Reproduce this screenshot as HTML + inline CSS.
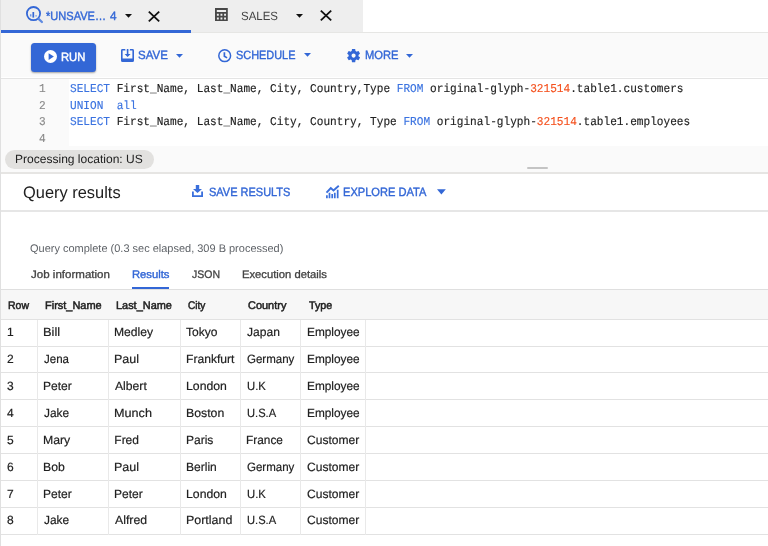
<!DOCTYPE html>
<html><head><meta charset="utf-8">
<style>
html,body{margin:0;padding:0;}
body{width:768px;height:546px;overflow:hidden;background:#fff;position:relative;font-family:"Liberation Sans",sans-serif;color:#212121;}
.a{text-rendering:geometricPrecision;position:absolute;white-space:nowrap;line-height:1;transform-origin:0 0;}
.b{color:#3367d6;-webkit-text-stroke:0.38px #3367d6;}
.tabbar{left:0;top:0;width:363px;height:32px;background:#eeeeee;}
.mono{font-family:"Liberation Mono",monospace;font-size:12px;transform:scaleX(0.926);-webkit-text-stroke:0.15px;}
.k{color:#3b73e0;}
.n{color:#f4511e;}
svg{position:absolute;overflow:visible;}
.cell{font-size:12px;color:#212121;-webkit-text-stroke:0.18px #212121;}
.th{font-size:11.1px;color:#212121;-webkit-text-stroke:0.5px #212121;}
.hl{position:absolute;left:0;width:768px;height:1px;background:#e2e2e2;}
.vl{position:absolute;width:1px;background:#e9e9e9;top:319.7px;height:215px;}
</style></head><body><div id="root" style="position:absolute;left:0;top:0;width:768px;height:546px;will-change:transform;">
<!-- tab bar -->
<div class="a tabbar"></div>
<div class="a" style="left:0;top:32.3px;width:768px;height:1.2px;background:#e6e6e4;"></div>
<div class="a" style="left:0;top:0;width:1px;height:546px;background:#e0e0e0;"></div>
<div class="a" style="left:1px;top:30.4px;width:190px;height:2.2px;background:#3367d6;"></div>
<svg style="left:24px;top:4px" width="22" height="22" viewBox="0 0 22 22"><circle cx="9.5" cy="9.6" r="6.6" fill="none" stroke="#3367d6" stroke-width="1.8"/><path d="M14.6 14.9L17.9 18" stroke="#5f8ae0" stroke-width="2.3" stroke-linecap="round"/><path d="M9.3 8v5.6" stroke="#3367d6" stroke-width="1.7"/><path d="M6.7 10.2v2.4M12.1 11.2v1.4" stroke="#6f96e4" stroke-width="1.5"/></svg>
<div class="a b" id="t1" style="left:45.56px;top:10px;font-size:12px;transform:scaleX(0.9213);">*UNSAVE…</div>
<div class="a b" id="t1n" style="left:110.00px;top:10px;font-size:12px;transform:scaleX(0.9811);">4</div>
<svg style="left:124.5px;top:13.8px" width="7" height="4" viewBox="0 0 7 4"><path d="M0 0h7L3.5 3.7z" fill="#111"/></svg>
<svg style="left:148px;top:10.6px" width="12" height="11" viewBox="0 0 12 11"><path d="M0.8 0.6L11.2 10.4M11.2 0.6L0.8 10.4" stroke="#111" stroke-width="1.8"/></svg>
<!-- tab 2 -->
<svg style="left:215px;top:8.1px" width="12.8" height="12.9" viewBox="0 0 12.8 12.9"><path d="M0 0h12.8v12.9h-12.8z M1.800 2.100v1.800h9.300v-1.800z M1.9 5.8v1.9h1.9v-1.9z M5.5 5.8v1.9h1.9v-1.9z M9.1 5.8v1.9h1.9v-1.9z M1.9 9.6v1.9h1.9v-1.9z M5.5 9.6v1.9h1.9v-1.9z M9.1 9.6v1.9h1.9v-1.9z" fill="#484848" fill-rule="evenodd"/></svg>
<div class="a" id="t2" style="left:240.71px;top:10px;font-size:12px;color:#424242;transform:scaleX(0.9548);">SALES</div>
<svg style="left:296.4px;top:14.1px" width="7" height="4" viewBox="0 0 7 4"><path d="M0 0h7L3.5 3.7z" fill="#111"/></svg>
<svg style="left:320.4px;top:10.4px" width="12" height="11" viewBox="0 0 12 11"><path d="M0.8 0.6L11.2 10.4M11.2 0.6L0.8 10.4" stroke="#111" stroke-width="1.8"/></svg>
<!-- toolbar -->
<div class="a" style="left:1px;top:33px;width:767px;height:44px;background:#fafafa;"></div>
<div class="hl" style="top:77.6px;background:#e4e4e4;"></div>
<div class="a" style="left:31px;top:42.5px;width:65px;height:29.5px;background:#3367d6;border-radius:3.5px;box-shadow:0 1px 2px rgba(0,0,0,.35);"></div>
<svg style="left:43.8px;top:49.6px" width="13" height="13" viewBox="0 0 13 13"><circle cx="6.500" cy="6.500" r="6.500" fill="#fff"/><path d="M4.600 3.200v6.800l5.300-3.400z" fill="#3367d6"/></svg>
<div class="a" id="run" style="left:61.31px;top:51px;font-size:12px;color:#fff;-webkit-text-stroke:0.45px #fff;transform:scaleX(0.9371);">RUN</div>
<svg style="left:120.8px;top:49.1px" width="13" height="12.9" viewBox="0 0 13 12.9"><path d="M1.500 0h10a1.500 1.500 0 0 1 1.500 1.500v9.900a1.500 1.500 0 0 1-1.500 1.500h-10a1.500 1.500 0 0 1-1.500-1.500v-9.900a1.500 1.500 0 0 1 1.500-1.500z M1.600 1.600v7.800h9.800v-7.800z" fill="#3367d6" fill-rule="evenodd"/><rect x="4.300" y="-0.200" width="4.600" height="2" fill="#fafafa"/><path d="M5.800 0h1.600v5h2.200l-3 3.100-3-3.100h2.200z" fill="#3367d6"/></svg>
<div class="a b" id="save" style="margin-top:-0.6px;left:138.28px;top:50px;font-size:12px;transform:scaleX(0.9580);">SAVE</div>
<svg style="left:175.6px;top:53.5px" width="7" height="4" viewBox="0 0 7 4"><path d="M0 0h7L3.5 3.7z" fill="#3367d6"/></svg>
<svg style="left:218.3px;top:48.9px" width="13.4" height="13.4" viewBox="0 0 13.4 13.4"><circle cx="6.7" cy="6.7" r="5.9" fill="none" stroke="#3367d6" stroke-width="1.5"/><path d="M6.4 3.300v4l2.700 1.600" fill="none" stroke="#3367d6" stroke-width="1.700"/></svg>
<div class="a b" id="sched" style="margin-top:-0.6px;left:236.49px;top:50px;font-size:12px;transform:scaleX(0.9100);">SCHEDULE</div>
<svg style="left:303.9px;top:53.3px" width="7" height="4" viewBox="0 0 7 4"><path d="M0 0h7L3.5 3.7z" fill="#3367d6"/></svg>
<svg style="left:347.3px;top:48.7px" width="13.2" height="13.2" viewBox="2 2 20 20"><path fill="#3367d6" d="M19.43 12.98c.04-.32.07-.64.07-.98s-.03-.66-.07-.98l2.11-1.65c.19-.15.24-.42.12-.64l-2-3.46c-.12-.22-.39-.3-.61-.22l-2.49 1c-.52-.4-1.08-.73-1.69-.98l-.38-2.65C14.46 2.18 14.25 2 14 2h-4c-.25 0-.46.18-.49.42l-.38 2.65c-.61.25-1.17.59-1.69.98l-2.49-1c-.23-.09-.49 0-.61.22l-2 3.46c-.13.22-.07.49.12.64l2.11 1.65c-.04.32-.07.65-.07.98s.03.66.07.98l-2.11 1.65c-.19.15-.24.42-.12.64l2 3.46c.12.22.39.3.61.22l2.49-1c.52.4 1.08.73 1.69.98l.38 2.65c.03.24.24.42.49.42h4c.25 0 .46-.18.49-.42l.38-2.65c.61-.25 1.17-.59 1.69-.98l2.49 1c.23.09.49 0 .61-.22l2-3.46c.12-.22.07-.49-.12-.64l-2.11-1.65zM12 15.1c-1.710 0-3.100-1.390-3.100-3.100s1.390-3.100 3.100-3.100 3.100 1.390 3.100 3.100-1.390 3.100-3.100 3.100z"/></svg>
<div class="a b" id="more" style="margin-top:-0.6px;left:365.26px;top:50px;font-size:12px;transform:scaleX(0.9295);">MORE</div>
<svg style="left:406px;top:53.5px" width="7" height="4" viewBox="0 0 7 4"><path d="M0 0h7L3.5 3.7z" fill="#3367d6"/></svg>
<!-- editor -->
<div class="a" style="left:1px;top:78.6px;width:68.2px;height:68px;background:#fafafa;"></div>
<div class="a mono" id="ln1" style="left:38.5px;top:83.0px;color:#8a8a8a;">1</div>
<div class="a mono" style="left:38.5px;top:99.7px;color:#8a8a8a;">2</div>
<div class="a mono" style="left:38.5px;top:116.3px;color:#8a8a8a;">3</div>
<div class="a mono" style="left:38.5px;top:133.0px;color:#8a8a8a;">4</div>
<div class="a mono" id="c1" style="left:69.5px;top:83.0px;"><span class="k">SELECT</span> First_Name, Last_Name, City, Country,Type <span class="k">FROM</span> original-glyph-<span class="n">321514</span>.table1.customers</div>
<div class="a mono" id="c2" style="left:69.5px;top:99.7px;"><span class="k">UNION</span>&nbsp; <span class="k">all</span></div>
<div class="a mono" id="c3" style="left:69.5px;top:116.3px;"><span class="k">SELECT</span> First_Name, Last_Name, City, Country, Type <span class="k">FROM</span> original-glyph-<span class="n">321514</span>.table1.employees</div>
<!-- gray band -->
<div class="a" style="left:0;top:146.2px;width:768px;height:26.4px;background:#fafafa;"></div>
<div class="a" style="left:4.7px;top:150.1px;width:149.3px;height:18.8px;background:#e2e1df;border-radius:10px;"></div>
<div class="a" id="proc" style="left:14.75px;top:153px;font-size:12px;color:#212121;transform:scaleX(1.0026);">Processing location: US</div>
<div class="a" style="left:527px;top:166.5px;width:21px;height:2.5px;background:#c4c4c4;border-radius:1px;"></div>
<div class="hl" style="top:172.3px;height:1.3px;background:#e6e5e3;"></div>
<!-- results header -->
<div class="a" id="qr" style="left:22.95px;top:184.6px;font-size:16.7px;color:#212121;transform:scaleX(0.9834);">Query results</div>
<svg style="left:191.8px;top:185.4px" width="11" height="12" viewBox="0 0 11 12"><path d="M3.800 0h3.400v3.900h2.800L5.500 8 1 3.900h2.800z M0 6.600h1.800v3.600h7.400v-3.600h1.800v5.400h-11z" fill="#3a6fdc"/></svg>
<div class="a b" id="sr" style="left:208.99px;top:186px;font-size:12px;transform:scaleX(0.9156);">SAVE RESULTS</div>
<svg style="left:326px;top:185px" width="13.2" height="13.4" viewBox="0 0 13.2 13.4"><path d="M0.500 7.700L4.800 3.100L7.500 5.500L12.800 0.800" stroke="#3a6fdc" stroke-width="1.900" fill="none"/><path d="M0.900 13.300V10.200 M3.500 13.300V7.800 M6.200 13.300V9 M8.800 13.300V7.800 M11.700 13.300V4.800" stroke="#3a6fdc" stroke-width="1.700" fill="none"/></svg>
<div class="a b" id="ed" style="left:342.67px;top:186px;font-size:12px;transform:scaleX(0.9235);">EXPLORE DATA</div>
<svg style="left:436.7px;top:189.4px" width="8.8" height="5.6" viewBox="0 0 10 6"><path d="M0 0h10L5 6z" fill="#3367d6"/></svg>
<div class="hl" style="top:210.3px;height:1.3px;background:#e6e6e6;"></div>
<!-- status -->
<div class="a" id="qc" style="left:30.34px;top:243.5px;font-size:11px;color:#5f6368;transform:scaleX(0.9984);">Query complete (0.3 sec elapsed, 309 B processed)</div>
<div class="a" id="ji" style="-webkit-text-stroke:0.3px #424242;left:30.74px;top:269.5px;font-size:11px;color:#424242;transform:scaleX(1.0492);">Job information</div>
<div class="a" id="rs" style="left:132.33px;top:269.5px;font-size:11px;color:#3367d6;-webkit-text-stroke:0.4px #3367d6;transform:scaleX(1.0206);">Results</div>
<div class="a" id="js" style="-webkit-text-stroke:0.3px #424242;left:192.09px;top:269.5px;font-size:11px;color:#424242;transform:scaleX(0.9534);">JSON</div>
<div class="a" id="exd" style="-webkit-text-stroke:0.3px #424242;left:242.00px;top:269.5px;font-size:11px;color:#424242;transform:scaleX(1.0220);">Execution details</div>
<div class="a" style="left:132.3px;top:287px;width:37.2px;height:2.3px;background:#3367d6;"></div>
<div class="hl" style="top:289.1px;background:#dfdfdf;"></div>
<!-- table -->
<div class="a" style="left:0;top:290px;width:768px;height:29px;background:#f7f7f7;"></div>
<div id="tbl">
<div class="a th" id="h0" style="left:8.39px;top:300.6px;transform:scaleX(0.9457);">Row</div>
<div class="a th" id="h1" style="left:44.57px;top:300.6px;transform:scaleX(0.9891);">First_Name</div>
<div class="a th" id="h2" style="left:115.98px;top:300.6px;transform:scaleX(0.9852);">Last_Name</div>
<div class="a th" id="h3" style="left:187.50px;top:300.6px;transform:scaleX(0.9110);">City</div>
<div class="a th" id="h4" style="left:247.88px;top:300.6px;transform:scaleX(0.9874);">Country</div>
<div class="a th" id="h5" style="left:308.90px;top:300.6px;transform:scaleX(0.9670);">Type</div>
<div class="hl" style="top:318.70px;"></div>
<div class="a cell" id="r0c0" style="left:7px;top:326.30px;">1</div>
<div class="a cell" id="r0c1" style="left:42.55px;top:326.30px;transform:scaleX(1.0697);">Bill</div>
<div class="a cell" id="r0c2" style="left:113.90px;top:326.30px;transform:scaleX(1.0088);">Medley</div>
<div class="a cell" id="r0c3" style="left:186.22px;top:326.30px;transform:scaleX(1.0042);">Tokyo</div>
<div class="a cell" id="r0c4" style="left:247.22px;top:326.30px;transform:scaleX(1.0045);">Japan</div>
<div class="a cell" id="r0c5" style="left:307.30px;top:326.30px;transform:scaleX(0.9855);">Employee</div>
<div class="hl" style="top:345.58px;"></div>
<div class="a cell" id="r1c0" style="left:7px;top:353.18px;">2</div>
<div class="a cell" id="r1c1" style="left:43.63px;top:353.18px;transform:scaleX(0.9610);">Jena</div>
<div class="a cell" id="r1c2" style="left:114.08px;top:353.18px;transform:scaleX(1.0422);">Paul</div>
<div class="a cell" id="r1c3" style="left:186.30px;top:353.18px;transform:scaleX(1.0094);">Frankfurt</div>
<div class="a cell" id="r1c4" style="left:247.30px;top:353.18px;transform:scaleX(0.9587);">Germany</div>
<div class="a cell" id="r1c5" style="left:307.30px;top:353.18px;transform:scaleX(0.9855);">Employee</div>
<div class="hl" style="top:372.46px;"></div>
<div class="a cell" id="r2c0" style="left:7px;top:380.06px;">3</div>
<div class="a cell" id="r2c1" style="left:42.79px;top:380.06px;transform:scaleX(1.0013);">Peter</div>
<div class="a cell" id="r2c2" style="left:115.44px;top:380.06px;transform:scaleX(1.0140);">Albert</div>
<div class="a cell" id="r2c3" style="left:185.50px;top:380.06px;transform:scaleX(1.0216);">London</div>
<div class="a cell" id="r2c4" style="left:246.81px;top:380.06px;transform:scaleX(0.9425);">U.K</div>
<div class="a cell" id="r2c5" style="left:307.30px;top:380.06px;transform:scaleX(0.9855);">Employee</div>
<div class="hl" style="top:399.34px;"></div>
<div class="a cell" id="r3c0" style="left:7px;top:406.94px;">4</div>
<div class="a cell" id="r3c1" style="left:43.62px;top:406.94px;transform:scaleX(0.9912);">Jake</div>
<div class="a cell" id="r3c2" style="left:114.08px;top:406.94px;transform:scaleX(1.0539);">Munch</div>
<div class="a cell" id="r3c3" style="left:186.30px;top:406.94px;transform:scaleX(1.0250);">Boston</div>
<div class="a cell" id="r3c4" style="left:247.30px;top:406.94px;transform:scaleX(0.9290);">U.S.A</div>
<div class="a cell" id="r3c5" style="left:307.30px;top:406.94px;transform:scaleX(0.9855);">Employee</div>
<div class="hl" style="top:426.22px;"></div>
<div class="a cell" id="r4c0" style="left:7px;top:433.82px;">5</div>
<div class="a cell" id="r4c1" style="left:42.55px;top:433.82px;transform:scaleX(1.0221);">Mary</div>
<div class="a cell" id="r4c2" style="left:114.30px;top:433.82px;transform:scaleX(1.0000);">Fred</div>
<div class="a cell" id="r4c3" style="left:186.30px;top:433.82px;transform:scaleX(1.0011);">Paris</div>
<div class="a cell" id="r4c4" style="left:246.26px;top:433.82px;transform:scaleX(0.9883);">France</div>
<div class="a cell" id="r4c5" style="left:307.20px;top:433.82px;transform:scaleX(1.0041);">Customer</div>
<div class="hl" style="top:453.10px;"></div>
<div class="a cell" id="r5c0" style="left:7px;top:460.70px;">6</div>
<div class="a cell" id="r5c1" style="left:43.15px;top:460.70px;transform:scaleX(1.0177);">Bob</div>
<div class="a cell" id="r5c2" style="left:114.08px;top:460.70px;transform:scaleX(1.0422);">Paul</div>
<div class="a cell" id="r5c3" style="left:186.30px;top:460.70px;transform:scaleX(1.0041);">Berlin</div>
<div class="a cell" id="r5c4" style="left:247.30px;top:460.70px;transform:scaleX(0.9587);">Germany</div>
<div class="a cell" id="r5c5" style="left:307.20px;top:460.70px;transform:scaleX(1.0041);">Customer</div>
<div class="hl" style="top:479.98px;"></div>
<div class="a cell" id="r6c0" style="left:7px;top:487.58px;">7</div>
<div class="a cell" id="r6c1" style="left:42.79px;top:487.58px;transform:scaleX(1.0013);">Peter</div>
<div class="a cell" id="r6c2" style="left:113.90px;top:487.58px;transform:scaleX(1.0018);">Peter</div>
<div class="a cell" id="r6c3" style="left:185.50px;top:487.58px;transform:scaleX(1.0216);">London</div>
<div class="a cell" id="r6c4" style="left:246.81px;top:487.58px;transform:scaleX(0.9425);">U.K</div>
<div class="a cell" id="r6c5" style="left:307.20px;top:487.58px;transform:scaleX(1.0041);">Customer</div>
<div class="hl" style="top:506.86px;"></div>
<div class="a cell" id="r7c0" style="left:7px;top:514.46px;">8</div>
<div class="a cell" id="r7c1" style="left:43.62px;top:514.46px;transform:scaleX(0.9912);">Jake</div>
<div class="a cell" id="r7c2" style="left:115.26px;top:514.46px;transform:scaleX(1.0224);">Alfred</div>
<div class="a cell" id="r7c3" style="left:186.30px;top:514.46px;transform:scaleX(1.0359);">Portland</div>
<div class="a cell" id="r7c4" style="left:247.30px;top:514.46px;transform:scaleX(0.9290);">U.S.A</div>
<div class="a cell" id="r7c5" style="left:307.20px;top:514.46px;transform:scaleX(1.0041);">Customer</div>
<div class="hl" style="top:533.74px;"></div>
<div class="vl" style="left:37px;"></div>
<div class="vl" style="left:108.3px;"></div>
<div class="vl" style="left:180px;"></div>
<div class="vl" style="left:240px;"></div>
<div class="vl" style="left:300.2px;"></div>
<div class="vl" style="left:365.2px;"></div>
</div>
<div class="a" style="left:0;top:0;width:1px;height:546px;background:#e0e0e0;"></div>
</div></body></html>
